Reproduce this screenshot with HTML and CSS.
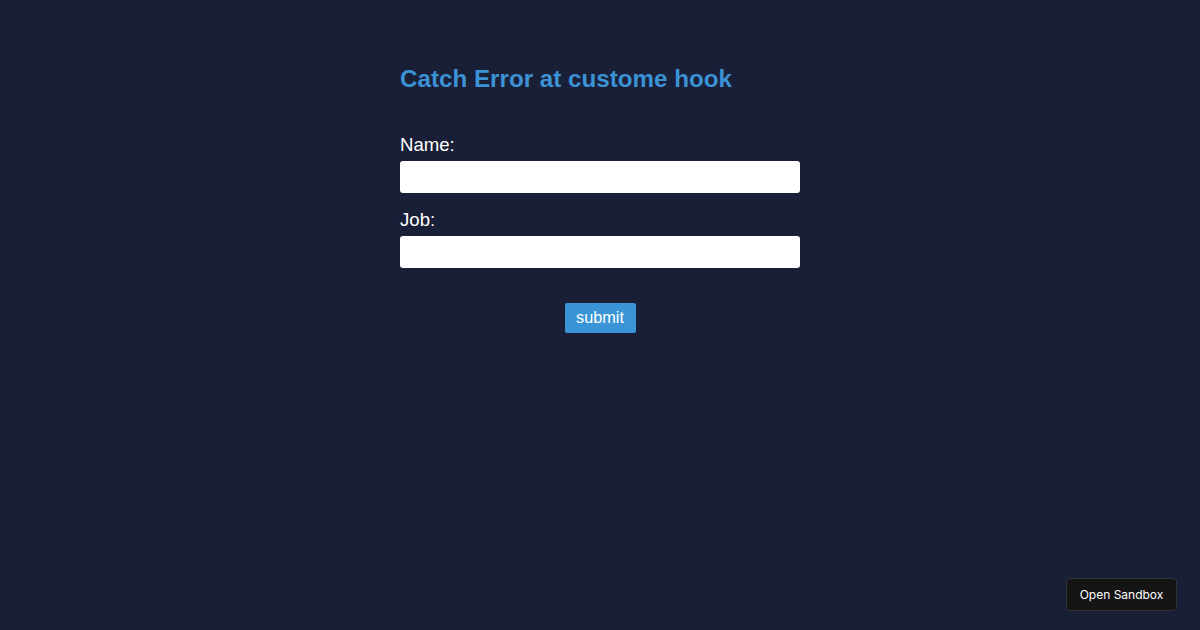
FILE: index.html
```html
<!DOCTYPE html>
<html>
<head>
<meta charset="utf-8">
<link rel="stylesheet" href="styles.css">
</head>
<body>
<main class="page">
  <h1 class="title">Catch Error at custome hook</h1>
  <form class="form">
    <label class="label" for="name">Name:</label>
    <input class="field" id="name" type="text">
    <label class="label label-next" for="job">Job:</label>
    <input class="field" id="job" type="text">
    <div class="actions"><button class="submit" type="button">submit</button></div>
  </form>
</main>
<button class="sandbox" type="button">Open Sandbox</button>
</body>
</html>
```

FILE: styles.css
```css
html, body {
  margin: 0;
  padding: 0;
  height: 100%;
}
body {
  background: #1a1f38;
  font-family: "Liberation Sans", Arial, sans-serif;
  color: #ffffff;
  overflow: hidden;
}
.page {
  width: 400px;
  margin: 0 auto;
  padding-top: 65px;
}
.title {
  margin: 0;
  font-size: 24.2px;
  font-weight: bold;
  line-height: 28px;
  color: #3b92d4;
}
.form {
  display: flex;
  flex-direction: column;
  margin-top: 41px;
}
.label {
  font-size: 18.6px;
  line-height: 21px;
  color: #ffffff;
  margin-bottom: 6px;
}
.label-next {
  margin-top: 16px;
}
.field {
  box-sizing: border-box;
  width: 400px;
  height: 32px;
  border: none;
  border-radius: 3px;
  background: #ffffff;
  padding: 0 8px;
  font-size: 16px;
  margin: 0;
}
.actions {
  display: flex;
  justify-content: center;
  margin-top: 35px;
}
.submit {
  width: 71px;
  height: 30px;
  border: none;
  border-radius: 2px;
  background: #3a94d6;
  color: #ffffff;
  font-family: "Liberation Sans", Arial, sans-serif;
  font-size: 16.3px;
  padding: 0 0 1px;
}
.sandbox {
  position: fixed;
  right: 23px;
  bottom: 19px;
  width: 111px;
  height: 33px;
  box-sizing: border-box;
  background: #151515;
  border: 1px solid #333333;
  border-radius: 4px;
  color: #ffffff;
  font-family: Inter, "Liberation Sans", sans-serif;
  font-size: 12px;
  padding: 0;
}
```
